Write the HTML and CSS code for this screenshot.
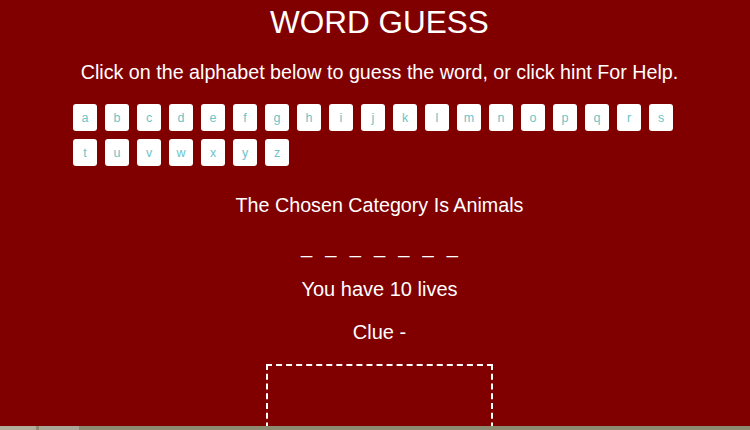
FILE: index.html
```html
<!DOCTYPE html>
<html>
<head>
<meta charset="utf-8">
<title>Word Guess</title>
<link rel="stylesheet" href="styles.css">
</head>
<body>
<div class="page">
  <h1 class="title">WORD GUESS</h1>
  <p class="intro">Click on the alphabet below to guess the word, or click hint For Help.</p>
  <ul class="alphabet">
    <li>a</li><li>b</li><li>c</li><li>d</li><li>e</li><li>f</li><li>g</li><li>h</li><li>i</li><li>j</li><li>k</li><li>l</li><li>m</li><li>n</li><li>o</li><li>p</li><li>q</li><li>r</li><li>s</li><li>t</li><li>u</li><li>v</li><li>w</li><li>x</li><li>y</li><li>z</li>
  </ul>
  <p class="category">The Chosen Category Is Animals</p>
  <p class="word">_ _ _ _ _ _ _</p>
  <p class="lives">You have 10 lives</p>
  <p class="clue">Clue -</p>
  <div class="canvas"></div>
</div>
<div class="taskbar">
  <span class="task task-start"></span>
  <span class="task task-app"></span>
</div>
</body>
</html>
```
FILE: styles.css
```css
html, body {
  margin: 0;
  padding: 0;
  height: 100%;
  overflow: hidden;
}
body {
  background: #800000;
  color: #ffffff;
  font-family: "Liberation Sans", Arial, sans-serif;
}
.page {
  display: flex;
  flex-direction: column;
  align-items: center;
  padding-left: 9px;
}
.title {
  font-size: 31.5px;
  font-weight: normal;
  margin: 4px 0 0;
  line-height: 37px;
}
.intro {
  font-size: 19.7px;
  margin: 20px 0 0;
  line-height: 23px;
}
.alphabet {
  list-style: none;
  padding: 0;
  margin: 20px 0 0 64px;
  align-self: flex-start;
  width: 604px;
  display: flex;
  flex-wrap: wrap;
  gap: 8px;
}
.alphabet li {
  width: 24px;
  height: 27px;
  background: #ffffff;
  border-radius: 3px;
  color: #6cc4c8;
  font-size: 12.5px;
  display: flex;
  align-items: center;
  justify-content: center;
  padding-top: 1px;
  box-sizing: border-box;
}
.category {
  font-size: 19.7px;
  margin: 28px 0 0;
  line-height: 23px;
}
.word {
  font-size: 20px;
  margin: 18px 0 0;
  line-height: 23px;
  word-spacing: 7.6px;
}
.lives {
  font-size: 20px;
  margin: 20px 0 0;
  line-height: 23px;
}
.clue {
  font-size: 20px;
  margin: 20px 0 0;
  line-height: 23px;
}
.canvas {
  margin-top: 20px;
  width: 223px;
  height: 80px;
  border: 2px dashed #ffffff;
}
.taskbar {
  position: fixed;
  left: 0;
  right: 0;
  bottom: 0;
  height: 4px;
  background: #8c8b72;
  display: flex;
  gap: 3px;
}
.task {
  display: block;
  height: 4px;
}
.task-start {
  width: 36px;
  background: #b3ae9c;
}
.task-app {
  width: 40px;
  background: #a9a797;
}
```
